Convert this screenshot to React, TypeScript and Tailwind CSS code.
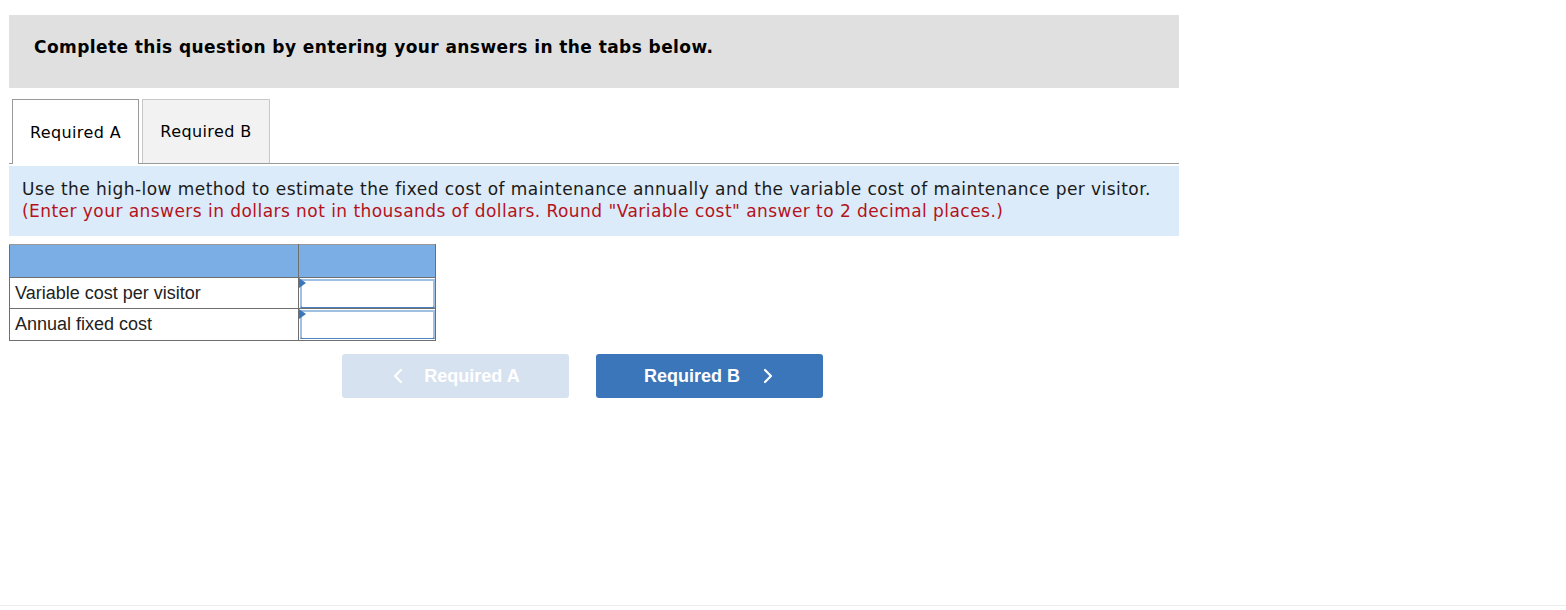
import React from "react";

const verdana = { fontFamily: '"DejaVu Sans", Verdana, sans-serif' };

function InputCell() {
  return (
    <td className="relative h-[31px] w-[137px] border border-[#6f6f6f] p-0 align-top">
      <div className="absolute left-0 top-0 h-0 w-0 border-y-[5px] border-l-[7px] border-y-transparent border-l-[#3a76b9]" />
      <div className="mx-auto mt-[1px] h-[29px] w-[135px] border-2 border-[#9fbfe3] border-b-[#4a83c2]">
        <input className="h-full w-full bg-white outline-none" />
      </div>
    </td>
  );
}

export default function App() {
  return (
    <div className="relative h-[610px] w-[1566px] bg-white">
      <div className="pt-[15px] pl-[9px] w-[1179px]">
        <div className="h-[73px] bg-[#e0e0e0] pl-[25px] pt-[20px]">
          <p className="text-[17px] font-bold text-black tracking-[0.42px]" style={verdana}>
            Complete this question by entering your answers in the tabs below.
          </p>
        </div>

        <div className="mt-[11px] flex items-end gap-[3px] border-b border-[#9a9a9a] pl-[3px]">
          <div
            className="-mb-px flex h-[65px] w-[127px] items-center justify-center border border-b-0 border-[#9a9a9a] bg-white pt-[1px] text-[16px] tracking-[0.4px] text-black"
            style={verdana}
          >
            Required A
          </div>
          <div
            className="flex h-[64px] w-[128px] items-center justify-center border border-b-0 border-[#c8c8c8] bg-[#f2f2f2] pt-[1px] text-[16px] tracking-[0.4px] text-black"
            style={verdana}
          >
            Required B
          </div>
        </div>

        <div
          className="mt-[2px] h-[70px] bg-[#dbebf9] pl-[13px] pt-[12px] text-[17px] leading-[22px] tracking-[0.45px]"
          style={verdana}
        >
          <p className="text-[#1a1a1a]">
            Use the high-low method to estimate the fixed cost of maintenance annually and the variable cost of maintenance per visitor.
          </p>
          <p className="text-[#b5121b]">
            (Enter your answers in dollars not in thousands of dollars. Round "Variable cost" answer to 2 decimal places.)
          </p>
        </div>

        <table
          className="mt-[8px] w-[427px] border-collapse text-[18px] text-[#222]"
          style={{ fontFamily: '"Liberation Sans", Arial, sans-serif' }}
        >
          <tbody>
            <tr className="h-[33px] bg-[#7aaee4]">
              <td className="w-[290px] border border-[#6f6f6f] border-t-[#999]"></td>
              <td className="border border-[#6f6f6f] border-t-[#999]"></td>
            </tr>
            <tr>
              <td className="h-[31px] border border-[#6f6f6f] pl-[5px] pb-[1px] leading-[20px]">Variable cost per visitor</td>
              <InputCell />
            </tr>
            <tr>
              <td className="h-[32px] border border-[#6f6f6f] pl-[5px] pb-[1px] leading-[20px]">Annual fixed cost</td>
              <InputCell />
            </tr>
          </tbody>
        </table>

        <div
          className="mt-[13px] flex gap-[27px] pl-[333px] text-[18px] font-bold text-white"
          style={{ fontFamily: '"Liberation Sans", Arial, sans-serif' }}
        >
          <div className="flex h-[44px] w-[227px] items-center justify-center gap-[21px] rounded-[3px] bg-[#d7e2f0] pl-[2px]">
            <svg width="10" height="16" viewBox="0 0 10 16" fill="none">
              <path d="M8 2L2 8l6 6" stroke="white" strokeWidth="2.2" strokeLinecap="round" strokeLinejoin="round" />
            </svg>
            <span>Required A</span>
          </div>
          <div className="flex h-[44px] w-[227px] items-center justify-center gap-[23px] rounded-[3px] bg-[#3a76b9] pr-[2px]">
            <span>Required B</span>
            <svg width="10" height="16" viewBox="0 0 10 16" fill="none">
              <path d="M2 2l6 6-6 6" stroke="white" strokeWidth="2.2" strokeLinecap="round" strokeLinejoin="round" />
            </svg>
          </div>
        </div>
      </div>

      <div className="absolute bottom-[4px] left-0 h-px w-full bg-[#ededed]" />
    </div>
  );
}
